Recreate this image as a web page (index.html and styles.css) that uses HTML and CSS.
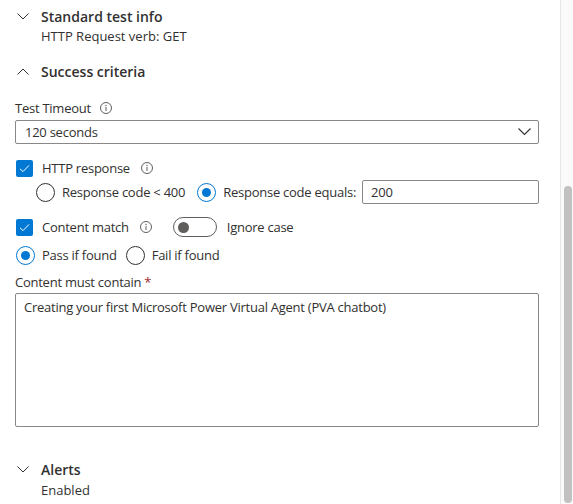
FILE: index.html
```html
<!DOCTYPE html>
<html>
<head>
<meta charset="utf-8">
<link rel="stylesheet" href="styles.css">
</head>
<body>
<div class="page">
  <main class="content">
    <div class="sec-head first">
      <svg class="chev" width="12" height="7" viewBox="0 0 12 7"><polyline points="0.5,0.5 6,6 11.5,0.5" fill="none" stroke="#323130" stroke-width="1"/></svg>
      <span class="sec-title">Standard test info</span>
    </div>
    <div class="sec-sub">HTTP Request verb: GET</div>

    <div class="sec-head second">
      <svg class="chev" width="12" height="7" viewBox="0 0 12 7"><polyline points="0.5,6.5 6,1 11.5,6.5" fill="none" stroke="#323130" stroke-width="1"/></svg>
      <span class="sec-title">Success criteria</span>
    </div>

    <div class="label timeout-label">Test Timeout
      <svg class="info" width="12" height="12" viewBox="0 0 12 12"><circle cx="6" cy="6" r="5.5" fill="none" stroke="#605e5c" stroke-width="1"/><rect x="5.5" y="5" width="1" height="4" fill="#605e5c"/><circle cx="6" cy="3.5" r="0.7" fill="#605e5c"/></svg>
    </div>
    <div class="dropdown">
      <span>120 seconds</span>
      <svg width="13" height="8" viewBox="0 0 13 8"><polyline points="0.5,0.5 6.5,6.5 12.5,0.5" fill="none" stroke="#323130" stroke-width="1.1"/></svg>
    </div>

    <div class="row check-row http-row">
      <span class="checkbox"><svg width="17" height="17" viewBox="0 0 17 17"><polyline points="4,8.8 7,11.6 13,5.4" fill="none" stroke="#fff" stroke-width="1"/></svg></span>
      <span class="text">HTTP response</span>
      <svg class="info" width="12" height="12" viewBox="0 0 12 12"><circle cx="6" cy="6" r="5.5" fill="none" stroke="#605e5c" stroke-width="1"/><rect x="5.5" y="5" width="1" height="4" fill="#605e5c"/><circle cx="6" cy="3.5" r="0.7" fill="#605e5c"/></svg>
    </div>

    <div class="row radio-row code-row">
      <span class="radio"></span>
      <span class="text">Response code &lt; 400</span>
      <span class="radio on r2"></span>
      <span class="text">Response code equals:</span>
      <div class="code-input">200</div>
    </div>

    <div class="row check-row match-row">
      <span class="checkbox"><svg width="17" height="17" viewBox="0 0 17 17"><polyline points="4,8.8 7,11.6 13,5.4" fill="none" stroke="#fff" stroke-width="1"/></svg></span>
      <span class="text">Content match</span>
      <svg class="info" width="12" height="12" viewBox="0 0 12 12"><circle cx="6" cy="6" r="5.5" fill="none" stroke="#605e5c" stroke-width="1"/><rect x="5.5" y="5" width="1" height="4" fill="#605e5c"/><circle cx="6" cy="3.5" r="0.7" fill="#605e5c"/></svg>
      <span class="toggle"><span class="knob"></span></span>
      <span class="text">Ignore case</span>
    </div>

    <div class="row radio-row pass-row">
      <span class="radio on"></span>
      <span class="text">Pass if found</span>
      <span class="radio r3"></span>
      <span class="text">Fail if found</span>
    </div>

    <div class="label must-label">Content must contain <span class="req">*</span></div>
    <div class="textarea">Creating your first Microsoft Power Virtual Agent (PVA chatbot)</div>

    <div class="sec-head alerts">
      <svg class="chev" width="12" height="7" viewBox="0 0 12 7"><polyline points="0.5,0.5 6,6 11.5,0.5" fill="none" stroke="#323130" stroke-width="1"/></svg>
      <span class="sec-title">Alerts</span>
    </div>
    <div class="sec-sub">Enabled</div>
  </main>
  <div class="scrollbar"><div class="thumb"></div></div>
</div>
</body>
</html>
```

FILE: styles.css
```css
* { box-sizing: border-box; }
html, body { margin: 0; padding: 0; background: #fff; }
body {
  font-family: "Open Sans", "Noto Sans", sans-serif;
  font-size: 13px;
  letter-spacing: -0.25px;
  color: #323130;
  overflow: hidden;
}
.page {
  display: flex;
  width: 573px;
  height: 504px;
}
.content {
  width: 560px;
  padding: 0 21px 0 15px;
}
.scrollbar {
  width: 13px;
  height: 504px;
  background: #fafafa;
  border-left: 1px solid #e6e6e6;
  padding: 186px 1px 1px 3px;
}
.thumb {
  width: 8px;
  height: 317px;
  background: #c1c1c1;
  border-radius: 4px;
}
.sec-head {
  display: flex;
  align-items: center;
  height: 20px;
}
.sec-head .chev { margin-left: 2px; margin-right: 12px; }
.sec-title { font-weight: 600; font-size: 14px; letter-spacing: 0; }
.sec-head.first { margin-top: 6px; }
.sec-head.second { margin-top: 15px; }
.sec-head.alerts { margin-top: 32px; }
.sec-sub { height: 20px; line-height: 20px; padding-left: 26px; letter-spacing: 0; }
.sec-head.alerts + .sec-sub { margin-top: 1px; }

.label { height: 20px; line-height: 20px; display: flex; align-items: center; }
.label .info { margin-left: 9px; }
.timeout-label { margin-top: 17px; }
.dropdown {
  margin-top: 2px;
  height: 24px;
  border: 1px solid #8a8886;
  border-radius: 2px;
  display: flex;
  align-items: center;
  justify-content: space-between;
  padding: 0 7px 0 9px;
}
.row { display: flex; align-items: center; }
.check-row { height: 20px; }
.checkbox {
  width: 17px;
  height: 17px;
  background: #0078d4;
  border-radius: 2px;
  margin-left: 1px;
  margin-right: 9px;
  display: flex;
}
.check-row .info { margin-left: 11px; }
.http-row { margin-top: 14px; }
.code-row { margin-top: 2px; height: 24px; padding-left: 21px; }
.radio {
  width: 19px;
  height: 19px;
  border: 1px solid #323130;
  border-radius: 50%;
  margin-right: 7px;
  position: relative;
  flex: none;
}
.radio.on { border-color: #0078d4; }
.radio.on::after {
  content: "";
  position: absolute;
  left: 4px; top: 4px;
  width: 9px; height: 9px;
  border-radius: 50%;
  background: #0078d4;
}
.r2 { margin-left: 12px; }
.r3 { margin-left: 9px; }
.code-input {
  margin-left: 6px;
  flex: 1;
  height: 24px;
  border: 1px solid #8a8886;
  border-radius: 2px;
  padding-left: 8px;
  line-height: 22px;
}
.match-row { margin-top: 13px; }
.toggle {
  margin-left: 21px;
  width: 44px;
  height: 20px;
  border: 1px solid #605e5c;
  border-radius: 10px;
  margin-right: 10px;
  display: flex;
  align-items: center;
  padding-left: 4px;
}
.knob { width: 11px; height: 11px; border-radius: 50%; background: #605e5c; }
.pass-row { margin-top: 8px; height: 20px; }
.pass-row .radio:first-child { margin-left: 1px; }
.must-label { margin-top: 7px; }
.req { color: #a4262c; margin-left: 3px; }
.textarea {
  margin-top: 1px;
  height: 134px;
  border: 1px solid #8a8886;
  border-radius: 2px;
  padding: 4px 8px;
  line-height: 18px;
}
```
